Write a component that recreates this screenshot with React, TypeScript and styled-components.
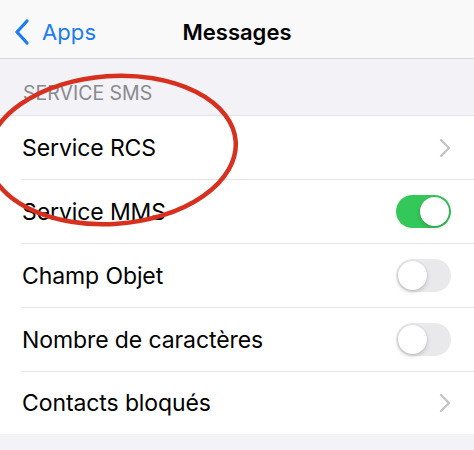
import React from "react";
import styled, { createGlobalStyle } from "styled-components";

const GlobalStyle = createGlobalStyle`
	html, body {
		margin: 0;
		padding: 0;
		background: #f2f2f7;
	}
	body {
		font-family: Inter, "Liberation Sans", sans-serif;
		-webkit-font-smoothing: antialiased;
	}
`;

const Screen = styled.div`
	position: relative;
	width: 474px;
	height: 450px;
	overflow: hidden;
	background: #f2f2f7;
`;

const NavBar = styled.header`
	position: relative;
	height: 59px;
	box-sizing: border-box;
	padding-top: 6px;
	display: flex;
	align-items: center;
	justify-content: center;
	background: #f9f9fa;
	border-bottom: 1px solid #d8d8dc;
`;

const BackButton = styled.div`
	position: absolute;
	left: 14px;
	top: 6px;
	bottom: 0;
	display: flex;
	align-items: center;
	column-gap: 12px;
	color: #1a7cf5;
	font-size: 22px;
	letter-spacing: 0.1px;
`;

const Title = styled.h1`
	margin: 0;
	font-size: 22px;
	font-weight: 600;
	color: #000;
`;

const SectionHeader = styled.div`
	height: 56px;
	padding-left: 23px;
	box-sizing: border-box;
	display: flex;
	align-items: flex-end;
	padding-bottom: 10px;
	font-size: 19.5px;
	color: #8a8a8e;
	text-transform: uppercase;
`;

const List = styled.ul`
	list-style: none;
	margin: 0;
	padding: 0;
	background: #fff;
	border-top: 1px solid #e4e4e8;
`;

const Row = styled.li`
	height: 64px;
	box-sizing: border-box;
	margin-left: 22px;
	padding-right: 23px;
	display: flex;
	align-items: center;
	justify-content: space-between;
	border-bottom: 1px solid #e4e4e8;

	&:last-child {
		border-bottom: none;
		height: 62px;
	}
`;

const Label = styled.span`
	font-size: 23px;
	color: #000;
	letter-spacing: -0.1px;
`;

const Track = styled.div<{ $on: boolean }>`
	position: relative;
	width: 55px;
	height: 33px;
	border-radius: 17px;
	background: ${(p) => (p.$on ? "#34c759" : "#e9e9eb")};
`;

const Thumb = styled.div<{ $on: boolean }>`
	position: absolute;
	top: 2px;
	left: ${(p) => (p.$on ? "24px" : "2px")};
	width: 29px;
	height: 29px;
	border-radius: 50%;
	background: #fff;
	box-shadow: 0 2px 4px rgba(0, 0, 0, 0.18), 0 0 0 0.5px rgba(0, 0, 0, 0.06);
`;

const Annotation = styled.svg`
	position: absolute;
	left: 0;
	top: 0;
	pointer-events: none;
`;

const Chevron = () => (
	<svg width="12" height="20" viewBox="0 0 12 20">
		<path d="M2 2 L10 10 L2 18" fill="none" stroke="#c4c4c8" strokeWidth="2.4" strokeLinecap="round" strokeLinejoin="round" />
	</svg>
);

const BackChevron = () => (
	<svg width="16" height="26" viewBox="0 0 16 26">
		<path d="M13 2 L3 13 L13 24" fill="none" stroke="#1a7cf5" strokeWidth="3.2" strokeLinecap="round" strokeLinejoin="round" />
	</svg>
);

const Toggle = ({ on }: { on: boolean }) => (
	<Track $on={on}>
		<Thumb $on={on} />
	</Track>
);

type Item = { label: string; kind: "link" | "on" | "off" };

const items: Item[] = [
	{ label: "Service RCS", kind: "link" },
	{ label: "Service MMS", kind: "on" },
	{ label: "Champ Objet", kind: "off" },
	{ label: "Nombre de caractères", kind: "off" },
	{ label: "Contacts bloqués", kind: "link" },
];

const App = () => {
	return (
		<>
			<GlobalStyle />
			<Screen>
				<NavBar>
					<BackButton>
						<BackChevron />
						<span>Apps</span>
					</BackButton>
					<Title>Messages</Title>
				</NavBar>
				<SectionHeader>Service SMS</SectionHeader>
				<List>
					{items.map((item) => (
						<Row key={item.label}>
							<Label>{item.label}</Label>
							{item.kind === "link" ? <Chevron /> : <Toggle on={item.kind === "on"} />}
						</Row>
					))}
				</List>
				<Annotation width="474" height="450" viewBox="0 0 474 450">
					<ellipse
						cx="112"
						cy="150"
						rx="124"
						ry="74"
						transform="rotate(-4 112 150)"
						fill="none"
						stroke="#d8301e"
						strokeWidth="4.5"
					/>
				</Annotation>
			</Screen>
		</>
	);
};

export default App;
